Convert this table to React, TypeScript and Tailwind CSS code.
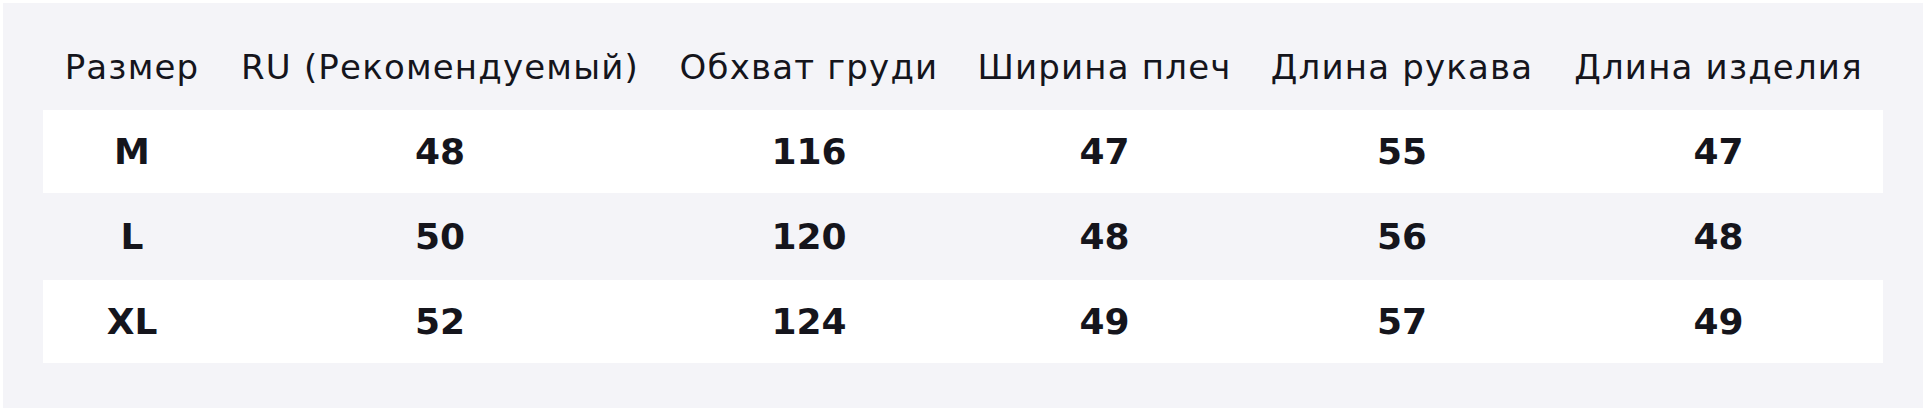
const headers = ['Размер', 'RU (Рекомендуемый)', 'Обхват груди', 'Ширина плеч', 'Длина рукава', 'Длина изделия'];

const rows = [
  ['M', '48', '116', '47', '55', '47'],
  ['L', '50', '120', '48', '56', '48'],
  ['XL', '52', '124', '49', '57', '49'],
];

export default function App() {
  return (
    <div className="bg-white pt-[3px] px-[3px] font-['DejaVu_Sans',sans-serif] text-[#15151c]">
      <div className="bg-[#f4f4f8] min-h-[405px] px-[40px] pt-[22px]">
        <table className="w-full table-fixed border-separate border-spacing-x-0 border-spacing-y-[2px]">
          <colgroup>
            <col className="w-[178px]" />
            <col className="w-[438px]" />
            <col className="w-[300px]" />
            <col className="w-[291px]" />
            <col className="w-[304px]" />
            <col className="w-[329px]" />
          </colgroup>
          <thead>
            <tr>
              {headers.map((h) => (
                <th key={h} className="pt-[20px] pb-[21px] px-0 text-center text-[34px] leading-[40px] font-normal tracking-[0.035em] whitespace-nowrap">
                  {h}
                </th>
              ))}
            </tr>
          </thead>
          <tbody>
            {rows.map((r, i) => (
              <tr key={r[0]} className={i % 2 === 0 ? 'bg-white' : 'bg-[#f4f4f8]'}>
                {r.map((v, j) => (
                  <td key={j} className="h-[83px] py-0 px-0 text-center text-[36px] leading-[42px] font-bold">
                    {v}
                  </td>
                ))}
              </tr>
            ))}
          </tbody>
        </table>
      </div>
    </div>
  );
}
